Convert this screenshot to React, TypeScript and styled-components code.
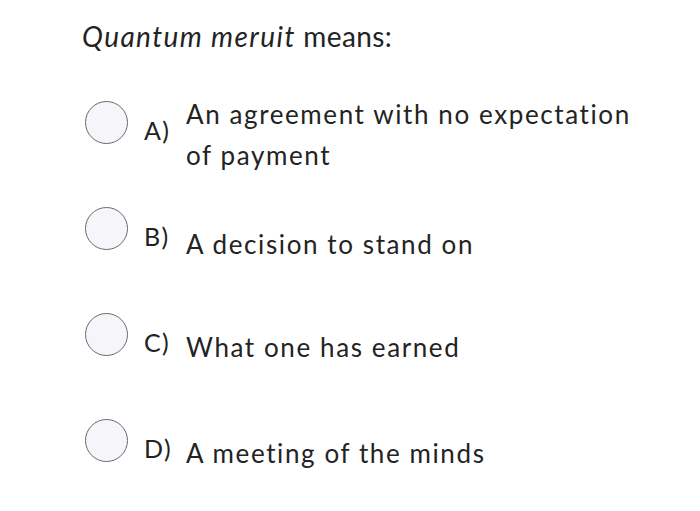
import React, { FC } from "react";
import styled, { createGlobalStyle } from "styled-components";

const GlobalStyle = createGlobalStyle`
	html, body {
		margin: 0;
		padding: 0;
		background: #fff;
	}
	body {
		font-family: Lato, "Noto Sans", sans-serif;
		color: #232323;
	}
`;

interface IAnswer {
	letter: string;
	text: string;
	textOffset: number;
}

const answers: IAnswer[] = [
	{ letter: "A)", text: "An agreement with no expectation of payment", textOffset: -7 },
	{ letter: "B)", text: "A decision to stand on", textOffset: 17 },
	{ letter: "C)", text: "What one has earned", textOffset: 14 },
	{ letter: "D)", text: "A meeting of the minds", textOffset: 14 },
];

const App: FC = () => {
	return (
		<>
			<GlobalStyle />
			<Page>
				<Question>
					<em>Quantum meruit</em> means:
				</Question>
				<AnswerList>
					{answers.map((a) => (
						<AnswerRow key={a.letter}>
							<Radio />
							<Letter>{a.letter}</Letter>
							<AnswerText $offset={a.textOffset}>{a.text}</AnswerText>
						</AnswerRow>
					))}
				</AnswerList>
			</Page>
		</>
	);
};

export default App;

const Page = styled.div`
	width: 700px;
	height: 511px;
	box-sizing: border-box;
	padding: 19px 0 0 82px;
`;

const Question = styled.h2`
	margin: 0;
	font-size: 28px;
	line-height: 34px;
	font-weight: 400;
	letter-spacing: 0.4px;

	em {
		font-style: italic;
		letter-spacing: 1.4px;
	}
`;

const AnswerList = styled.div`
	display: flex;
	flex-direction: column;
	margin-top: 48px;
	padding-left: 3px;
`;

const AnswerRow = styled.div`
	display: flex;
	align-items: flex-start;
	height: 106px;
`;

const Radio = styled.span`
	flex: none;
	width: 43px;
	height: 43px;
	box-sizing: border-box;
	border: 1.5px solid #6a6a6a;
	border-radius: 50%;
	background: #f6f6fa;
`;

const Letter = styled.span`
	flex: none;
	width: 42px;
	margin-left: 16px;
	margin-top: 14px;
	font-size: 25px;
	line-height: 30px;
	letter-spacing: 1.4px;
`;

const AnswerText = styled.span<{ $offset: number }>`
	width: 470px;
	margin-top: ${(p) => p.$offset}px;
	font-size: 26px;
	line-height: 41px;
	letter-spacing: 1.6px;
`;
